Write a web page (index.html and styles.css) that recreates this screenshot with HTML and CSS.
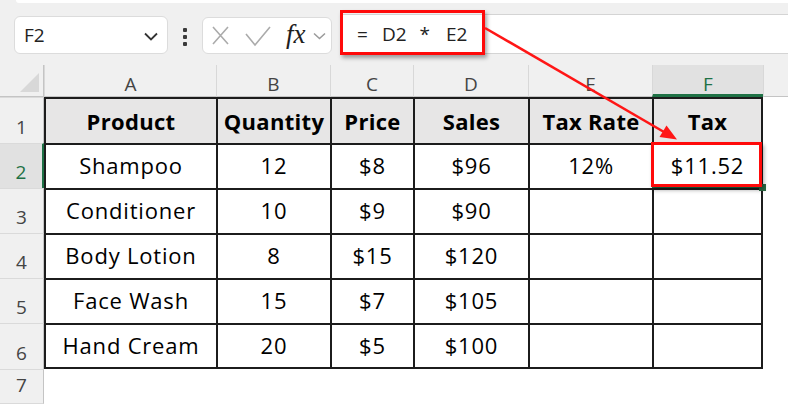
FILE: index.html
```html
<!DOCTYPE html>
<html lang="en">
<head>
<meta charset="utf-8">
<title>Tax formula</title>
<link rel="stylesheet" href="styles.css">
</head>
<body>
<div class="topstrip"></div>
<div class="toolbar">
  <div class="namebox">
    <span>F2</span>
    <svg class="chev" width="14" height="9" viewBox="0 0 14 9"><path d="M1 1.5L7 7.5L13 1.5" fill="none" stroke="#333" stroke-width="1.8"/></svg>
  </div>
  <div class="dots"><div class="dot"></div><div class="dot"></div><div class="dot"></div></div>
  <div class="fxbox">
    <svg class="icx" width="17" height="19" viewBox="0 0 17 19"><path d="M1 1L16 18M16 1L1 18" fill="none" stroke="#ababab" stroke-width="1.6"/></svg>
    <svg class="icv" width="26" height="21" viewBox="0 0 26 21"><path d="M1 8L10 19L25 1" fill="none" stroke="#ababab" stroke-width="1.6"/></svg>
    <span class="fx">fx</span>
    <svg class="chev2" width="13" height="8" viewBox="0 0 13 8"><path d="M1 1.5L6.5 6.5L12 1.5" fill="none" stroke="#9a9a9a" stroke-width="1.5"/></svg>
  </div>
  <div class="formula">
    <span class="tk">=</span><span class="tk t2">D2</span><span class="tk t3">*</span><span class="tk t4">E2</span>
  </div>
</div>

<div class="sheet">
  <div class="corner"><div class="tri"></div></div>
  <div class="ch">A</div><div class="ch">B</div><div class="ch">C</div><div class="ch">D</div><div class="ch">E</div><div class="ch sel">F</div><div class="ch g"></div>

  <div class="rh">1</div>
  <div class="c h">Product</div><div class="c h">Quantity</div><div class="c h">Price</div><div class="c h">Sales</div><div class="c h">Tax Rate</div><div class="c h last">Tax</div><div class="e"></div>

  <div class="rh sel">2</div>
  <div class="c">Shampoo</div><div class="c">12</div><div class="c">$8</div><div class="c">$96</div><div class="c">12%</div><div class="c last">$11.52</div><div class="e"></div>

  <div class="rh">3</div>
  <div class="c">Conditioner</div><div class="c">10</div><div class="c">$9</div><div class="c">$90</div><div class="c"></div><div class="c last"></div><div class="e"></div>

  <div class="rh">4</div>
  <div class="c">Body Lotion</div><div class="c">8</div><div class="c">$15</div><div class="c">$120</div><div class="c"></div><div class="c last"></div><div class="e"></div>

  <div class="rh">5</div>
  <div class="c">Face Wash</div><div class="c">15</div><div class="c">$7</div><div class="c">$105</div><div class="c"></div><div class="c last"></div><div class="e"></div>

  <div class="rh">6</div>
  <div class="c bot">Hand Cream</div><div class="c bot">20</div><div class="c bot">$5</div><div class="c bot">$100</div><div class="c bot"></div><div class="c bot last"></div><div class="e"></div>

  <div class="rh r7">7</div>
  <div class="e r7e"></div>
</div>

<div class="selline"></div>
<div class="handle"></div>
<div class="redbox rb1"></div>
<div class="redbox rb2"></div>
<svg class="arrow" width="788" height="404" viewBox="0 0 788 404">
  <line x1="485" y1="28" x2="664" y2="132" stroke="#ff1616" stroke-width="2.6"/>
  <polygon points="677,139.5 659.5,137 666.5,125.5" fill="#ff1616"/>
</svg>
</body>
</html>
```

FILE: styles.css
```css
* { box-sizing: border-box; }
html, body { margin: 0; padding: 0; }
body {
  width: 788px;
  height: 404px;
  overflow: hidden;
  position: relative;
  background: #f0f0f0;
  font-family: "Open Sans", "Noto Sans", sans-serif;
}

.topstrip {
  height: 3px;
  margin-left: 16px;
  background: #ffffff;
  border-bottom-left-radius: 6px;
}

.toolbar {
  height: 62px;
  display: flex;
  align-items: flex-start;
  padding: 13px 0 0 14px;
}

.namebox {
  width: 154px;
  height: 38px;
  background: #fff;
  border: 1px solid #dcdcdc;
  border-radius: 6px;
  display: flex;
  align-items: center;
  justify-content: space-between;
  padding: 0 9px 0 9px;
  font-size: 19px;
  color: #222;
}
.chev { margin-top: 2px; }

.dots {
  display: flex;
  flex-direction: column;
  gap: 3px;
  margin: 12px 15px 0 15px;
}
.dot { width: 4px; height: 4px; background: #3a3a3a; border-radius: 1px; }

.fxbox {
  width: 130px;
  height: 37px;
  margin-top: 1px;
  background: #fff;
  border: 1px solid #dcdcdc;
  border-radius: 6px;
  display: flex;
  align-items: center;
  padding-left: 9px;
}
.icx { margin-right: 16px; }
.icv { margin-right: 15px; margin-top: 1px; }
.fx {
  font-family: "Liberation Serif", "DejaVu Serif", serif;
  font-style: italic;
  font-size: 27px;
  line-height: 1;
  color: #1e1e1e;
  margin-right: 7px;
  margin-top: -3px;
}
.chev2 { margin-top: 1px; }

.formula {
  flex: 1;
  height: 40px;
  margin: -2px 0 0 8px;
  background: #fff;
  border-top: 1px solid #d4d4d4;
  border-bottom: 1px solid #d4d4d4;
  display: flex;
  align-items: center;
  padding-left: 17px;
  font-size: 19px;
  color: #222;
}
.t2 { margin-left: 14px; }
.t3 { margin-left: 13px; }
.t4 { margin-left: 16px; }

.sheet {
  display: grid;
  grid-template-columns: 44px 172px 114px 83px 115px 124px 111px 1fr;
  grid-template-rows: 32px 46px 45px 45px 45px 45px 46px 1fr;
  height: 339px;
}

.corner {
  background: #f0f0f0;
  border-right: 1px solid #c4c4c4;
  border-bottom: 1px solid #c4c4c4;
  display: flex;
  justify-content: flex-end;
  align-items: flex-end;
  padding: 0 4px 4px 0;
}
.tri {
  width: 19px;
  height: 19px;
  background: #d8d8d8;
  clip-path: polygon(100% 0, 100% 100%, 0 100%);
}

.ch {
  background: #f0f0f0;
  border-left: 1px solid #d8d8d8;
  border-bottom: 1px solid #c4c4c4;
  display: flex;
  justify-content: center;
  padding-top: 6px;
  font-size: 19px;
  line-height: 26px;
  color: #444;
}
.ch.sel {
  background: #e1e1e1;
  color: #1e7145;
  border-bottom: 3px solid #1e7145;
}

.rh {
  background: #f0f0f0;
  border-right: 1px solid #c4c4c4;
  border-top: 1px solid #dadada;
  display: flex;
  justify-content: center;
  align-items: flex-end;
  padding-bottom: 3px;
  font-size: 19px;
  line-height: 26px;
  color: #444;
}
.rh.sel {
  background: #e1e1e1;
  color: #1e7145;
  border-right: 2px solid #1e7145;
}
.rh.r7 {
  border-bottom: 1px solid #dadada;
  padding-bottom: 5px;
}

.c {
  background: #fff;
  border-left: 2px solid #1c1c1c;
  border-top: 2px solid #1c1c1c;
  display: flex;
  align-items: center;
  justify-content: center;
  padding-bottom: 3px;
  font-size: 22px;
  letter-spacing: 0.8px;
  color: #000;
  white-space: nowrap;
}
.c.h {
  background: #e7e6e6;
  font-weight: 700;
  letter-spacing: 0.3px;
  padding-bottom: 0;
}
.c.last { border-right: 2px solid #1c1c1c; }
.c.bot { border-bottom: 2px solid #1c1c1c; }

.e { background: #fff; }
.r7e { grid-column: span 7; }

.selline {
  position: absolute;
  left: 652px;
  top: 186px;
  width: 110px;
  height: 2px;
  background: #1e7145;
}
.handle {
  position: absolute;
  left: 759px;
  top: 184px;
  width: 7px;
  height: 7px;
  background: #2d6b45;
}
.redbox {
  position: absolute;
  border: 3px solid #ff0a0a;
  box-shadow: 2px 3px 4px rgba(0, 0, 0, 0.35);
}
.rb1 { left: 340px; top: 10px; width: 145px; height: 45px; }
.rb2 { left: 651px; top: 142px; width: 111px; height: 45px; }

.arrow {
  position: absolute;
  left: 0;
  top: 0;
  pointer-events: none;
}
```
